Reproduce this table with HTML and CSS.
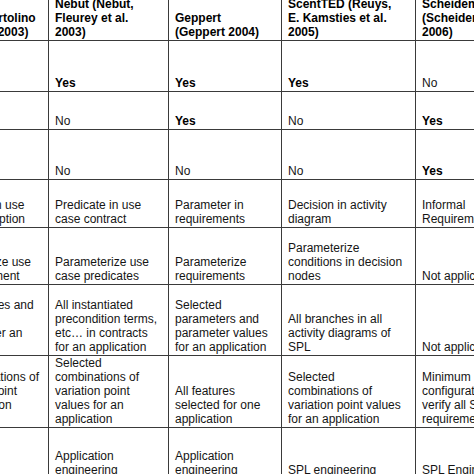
FILE: index.html
```html
<!DOCTYPE html>
<html lang="en">
<head>
<meta charset="utf-8">
<title>Comparison of SPL testing approaches</title>
<link rel="stylesheet" href="styles.css">
</head>
<body>
<div class="sheet">
<table class="grid">
<colgroup>
<col class="c0"><col class="c1"><col class="c2"><col class="c3"><col class="c4">
</colgroup>
<tr class="rh head">
<td>Tool<br>G. Bertolino<br>et al. 2003)</td>
<td>Nebut (Nebut,<br>Fleurey et al.<br>2003)</td>
<td>Geppert<br>(Geppert 2004)</td>
<td>ScentTED (Reuys,<br>E. Kamsties et al.<br>2005)</td>
<td>Scheidemann<br>(Scheidemann<br>2006)</td>
</tr>
<tr class="r1">
<td><b>Yes</b></td>
<td><b>Yes</b></td>
<td><b>Yes</b></td>
<td><b>Yes</b></td>
<td>No</td>
</tr>
<tr class="r2">
<td>No</td>
<td>No</td>
<td><b>Yes</b></td>
<td>No</td>
<td><b>Yes</b></td>
</tr>
<tr class="r3">
<td>No</td>
<td>No</td>
<td>No</td>
<td>No</td>
<td><b>Yes</b></td>
</tr>
<tr class="r4">
<td>Text in use<br>description</td>
<td>Predicate in use<br>case contract</td>
<td>Parameter in<br>requirements</td>
<td>Decision in activity<br>diagram</td>
<td>Informal<br>Requirements</td>
</tr>
<tr class="r5">
<td>Idealize use<br>document</td>
<td>Parameterize use<br>case predicates</td>
<td>Parameterize<br>requirements</td>
<td>Parameterize<br>conditions in decision<br>nodes</td>
<td>Not applicable</td>
</tr>
<tr class="r6">
<td>Choices and<br>tags<br>Further an<br>input</td>
<td>All instantiated<br>precondition terms,<br>etc… in contracts<br>for an application</td>
<td>Selected<br>parameters and<br>parameter values<br>for an application</td>
<td>All branches in all<br>activity diagrams of<br>SPL</td>
<td>Not applicable</td>
</tr>
<tr class="r7">
<td>All<br>Operations of<br>Key point<br>Notation<br>used</td>
<td>Selected<br>combinations of<br>variation point<br>values for an<br>application</td>
<td>All features<br>selected for one<br>application</td>
<td>Selected<br>combinations of<br>variation point values<br>for an application</td>
<td>Minimum<br>configuration to<br>verify all SPL<br>requirements</td>
</tr>
<tr class="r8">
<td>Both<br>Tests.</td>
<td>Application<br>engineering</td>
<td>Application<br>engineering</td>
<td>SPL engineering</td>
<td>SPL Engineering</td>
</tr>
</table>
</div>
</body>
</html>
```

FILE: styles.css
```css
html, body {
  margin: 0;
  padding: 0;
  background: #ffffff;
  overflow: hidden;
}

body {
  font-family: "Liberation Sans", Arial, Helvetica, sans-serif;
  font-size: 12px;
  color: #151515;
}

.sheet {
  margin: -10px 0 0 -40px;
}

.grid {
  border-collapse: collapse;
  table-layout: fixed;
  width: 585px;
}

.c0 { width: 88px; }
.c1 { width: 120px; }
.c2 { width: 113px; }
.c3 { width: 134px; }
.c4 { width: 130px; }

.grid td {
  border: 1px solid #3a3a3a;
  vertical-align: bottom;
  padding: 0 4px 1px 6px;
  line-height: 14px;
  white-space: nowrap;
  overflow: hidden;
}

.grid b,
.head td {
  font-weight: bold;
  color: #000;
}

.rh { height: 50px; }
.r1 { height: 51px; }
.r2 { height: 38px; }
.r3 { height: 50px; }
.r4 { height: 48px; }
.r5 { height: 57px; }
.r6 { height: 71px; }
.r7 { height: 69px; }
.r8 { height: 51px; }
```
